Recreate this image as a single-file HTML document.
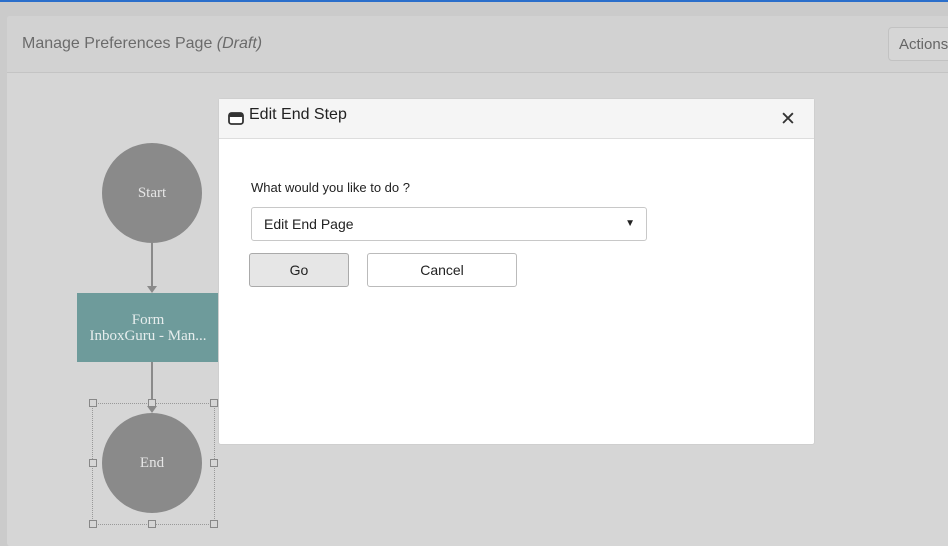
<!DOCTYPE html>
<html><head><style>
body{margin:0;width:948px;height:535px;overflow:hidden;background:#cbcbcb;font-family:"Liberation Sans",sans-serif;position:relative}
.top{position:absolute;left:0;top:0;width:948px;height:2px;background:#2b6fcb}
.panel{position:absolute;left:7px;top:16px;width:950px;height:530px;background:#d6d6d6;border-radius:3px}
.ph{position:absolute;left:0;top:0;right:0;height:56px;background:#d2d2d2;border-bottom:1px solid #c4c4c4;border-radius:3px 3px 0 0}
.title{position:absolute;left:15px;top:19px;font-size:16px;color:#6b6b6b}
.act{position:absolute;left:881px;top:11px;width:80px;height:34px;border:1px solid #c2c2c2;border-radius:4px;background:#d6d6d6;font-size:15px;color:#666;line-height:33px;padding-left:10px;box-sizing:border-box}
.circ{position:absolute;width:100px;height:100px;border-radius:50%;background:#8a8a8a;color:#e6e6e6;font-family:"Liberation Serif",serif;font-size:15px;text-align:center;line-height:100px}
.line{position:absolute;width:2px;background:#8a8a8a;left:151px}
.form{position:absolute;left:77px;top:293px;width:142px;height:69px;background:#6e9b9b;color:#e6eded;font-family:"Liberation Serif",serif;font-size:15px;text-align:center;line-height:16px;box-sizing:border-box;padding-top:19px;white-space:nowrap}
.h{position:absolute;width:6px;height:6px;border:1px solid #888;background:#d6d6d6}
.modal{position:absolute;left:218px;top:98px;width:597px;height:347px;background:#fff;border-radius:3px;border:1px solid #cfcfcf;box-sizing:border-box}
.mh{height:39px;background:#f5f5f5;border-bottom:1px solid #ddd;position:relative}
.mt{position:absolute;left:30px;top:7px;font-size:16px;color:#222}
.x{position:absolute;left:561px;top:9px;font-size:19px;color:#333}
.lab{position:absolute;left:32px;top:81px;font-size:13px;color:#222}
.sel{position:absolute;left:32px;top:108px;width:396px;height:34px;border:1px solid #c8c8c8;border-radius:3px;box-sizing:border-box;font-size:14px;color:#222;line-height:32px;padding-left:12px}
.sel span{position:absolute;right:11px;top:0;font-size:10px}
.btn{position:absolute;top:154px;height:34px;border:1px solid #bbb;border-radius:3px;box-sizing:border-box;font-size:14px;color:#222;text-align:center;line-height:32px}
</style></head><body>
<div class="top"></div>
<div class="panel"><div class="ph"><div class="title">Manage Preferences Page <i>(Draft)</i></div><div class="act">Actions</div></div></div>
<div class="circ" style="left:102px;top:143px">Start</div>
<div class="line" style="top:243px;height:46px"></div>
<div style="position:absolute;left:147px;top:286px;border-left:5px solid transparent;border-right:5px solid transparent;border-top:7px solid #8a8a8a"></div>
<div class="form">Form<br>InboxGuru - Man...</div>
<div class="line" style="top:362px;height:46px"></div>
<div style="position:absolute;left:147px;top:406px;border-left:5px solid transparent;border-right:5px solid transparent;border-top:7px solid #8a8a8a"></div>
<div style="position:absolute;left:92px;top:403px;width:121px;height:120px;border:1px dotted #999"></div>
<div class="circ" style="left:102px;top:413px">End</div>
<div class="h" style="left:89px;top:399px"></div><div class="h" style="left:148px;top:399px"></div><div class="h" style="left:210px;top:399px"></div>
<div class="h" style="left:89px;top:459px"></div><div class="h" style="left:210px;top:459px"></div>
<div class="h" style="left:89px;top:520px"></div><div class="h" style="left:148px;top:520px"></div><div class="h" style="left:210px;top:520px"></div>
<div class="modal">
<div class="mh">
<svg style="position:absolute;left:9px;top:13px" width="16" height="13" viewBox="0 0 16 13"><rect x="1" y="1" width="14" height="11" rx="2.5" fill="#fff" stroke="#333" stroke-width="1.8"/><rect x="1" y="1" width="14" height="4" rx="1.5" fill="#333"/></svg>
<div class="mt">Edit End Step</div><div class="x">✕</div></div>
<div class="lab">What would you like to do ?</div>
<div class="sel">Edit End Page<span>▼</span></div>
<div class="btn" style="left:30px;width:100px;background:#e6e6e6;border-color:#aaa">Go</div>
<div class="btn" style="left:148px;width:150px;background:#fff">Cancel</div>
</div>
</body></html>
